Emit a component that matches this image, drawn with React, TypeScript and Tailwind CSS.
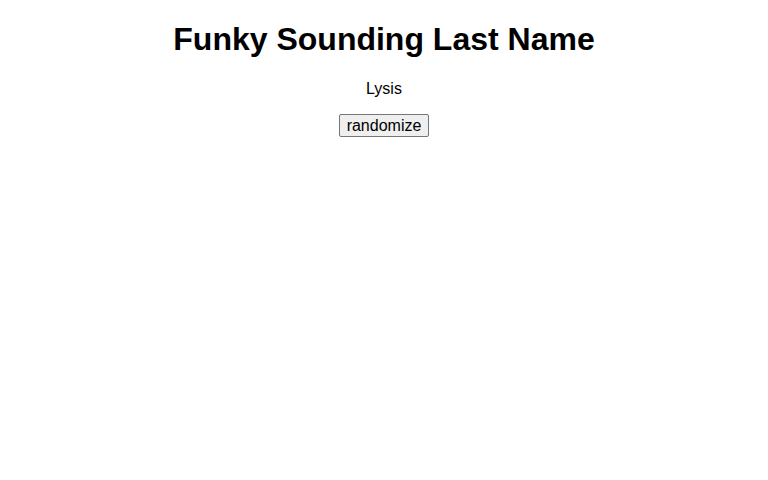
import { useState } from "react";

const names = ["Lysis", "Quibblewick", "Snorkelbach", "Fizzlethorpe", "Wobblestone"];

export default function App() {
  const [name, setName] = useState(names[0]);

  const randomize = () => {
    setName(names[Math.floor(Math.random() * names.length)]);
  };

  return (
    <div className="min-h-[480px] bg-white pt-[21px] text-center font-['Liberation_Sans',Arial,sans-serif] text-black">
      <h1 className="text-[32px] font-bold leading-[37px]">Funky Sounding Last Name</h1>
      <p className="mt-[22px] text-[16px] leading-[18px]">{name}</p>
      <div className="mt-[16px]">
        <button
          onClick={randomize}
          className="h-[23px] rounded-[2px] border border-[#767676] bg-[#efefef] px-[7px] text-[16px] leading-[19px] text-black"
        >
          randomize
        </button>
      </div>
    </div>
  );
}
